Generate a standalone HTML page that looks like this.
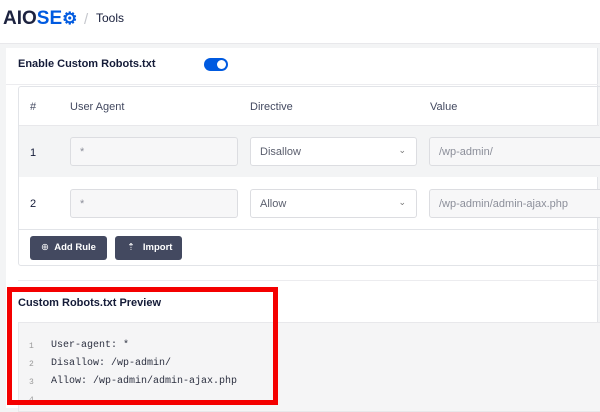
<!DOCTYPE html>
<html><head><style>
*{margin:0;padding:0;box-sizing:border-box}
body{width:600px;height:408px;overflow:hidden;background:#f3f4f5;font-family:"Liberation Sans",sans-serif;color:#141b38;position:relative}
.a{position:absolute}
.hdr{left:0;top:0;width:600px;height:44px;background:#fff;border-bottom:1px solid #e8e8eb}
.logo{left:3px;top:8px;font-weight:900;font-size:19px;letter-spacing:0px}
.card{left:6px;top:48px;width:592px;height:360px;background:#fff;border-right:1px solid #e2e4e8}
.lbl{font-size:11px;font-weight:bold;color:#141b38}
.tgl{left:204px;top:58px;width:24px;height:13px;border-radius:7px;background:#005ae0}
.tgl:after{content:"";position:absolute;right:2px;top:2px;width:9px;height:9px;border-radius:50%;background:#fff}
.tbl{left:18px;top:86px;width:590px;height:180px;border:1px solid #e2e4e8;border-radius:3px}
.th{font-size:11px;color:#434960;top:101px}
.inp{height:29px;border:1px solid #dcdde1;border-radius:3px;background:#f7f7f8;font-size:11px;color:#8c8f9a;padding:8px 9px}
.sel{background:#fff;color:#5b5f6e}
.chev{position:absolute;right:10px;top:7px;font-size:9px;color:#777}
.btn{top:236px;height:24px;background:#434960;border-radius:3px;color:#fff;font-size:9.5px;font-weight:bold;padding:6px 0 0 0}
.code{left:18px;top:322px;width:590px;height:90px;background:#f5f5f6;border:1px solid #e8e8eb;font-family:"Liberation Mono",monospace;font-size:10px;color:#2c3040}
.ln{position:absolute;left:10px;color:#999;font-size:8px}
.cl{position:absolute;left:32px}
</style></head><body>
<div class="a hdr"></div>
<div class="a logo"><span style="color:#1d2340">AIO</span><span style="color:#005ae0">SE</span><span style="color:#005ae0;font-size:17px">⚙</span></div>
<div class="a" style="left:84px;top:11px;font-size:15px;color:#c5c7cd">/</div>
<div class="a" style="left:96px;top:11px;font-size:12px;color:#141b38">Tools</div>
<div class="a card"></div>
<div class="a lbl" style="left:18px;top:58px">Enable Custom Robots.txt</div>
<div class="a tgl"></div>
<div class="a" style="left:6px;top:84px;width:592px;height:1px;background:#ececef"></div>
<div class="a tbl"></div>
<div class="a th" style="left:30px">#</div>
<div class="a th" style="left:70px">User Agent</div>
<div class="a th" style="left:250px">Directive</div>
<div class="a th" style="left:430px">Value</div>
<div class="a" style="left:19px;top:125px;width:580px;height:52px;background:#f3f4f5;border-top:1px solid #e8e8eb"></div>
<div class="a" style="left:19px;top:229px;width:580px;height:1px;background:#e2e4e8"></div>
<div class="a" style="left:30px;top:147px;font-size:11px">1</div>
<div class="a" style="left:30px;top:198px;font-size:11px">2</div>
<div class="a inp" style="left:70px;top:137px;width:168px">*</div>
<div class="a inp sel" style="left:250px;top:137px;width:167px">Disallow<span class="chev">⌄</span></div>
<div class="a inp" style="left:429px;top:137px;width:175px">/wp-admin/</div>
<div class="a inp" style="left:70px;top:189px;width:168px">*</div>
<div class="a inp sel" style="left:250px;top:189px;width:167px">Allow<span class="chev">⌄</span></div>
<div class="a inp" style="left:429px;top:189px;width:175px">/wp-admin/admin-ajax.php</div>
<div class="a btn" style="left:30px;width:77px"><span style="margin-left:11px;font-weight:normal">⊕</span>&nbsp;&nbsp;Add Rule</div>
<div class="a btn" style="left:115px;width:67px"><span style="margin-left:12px;font-weight:normal">⇡</span>&nbsp;&nbsp;&nbsp;Import</div>
<div class="a" style="left:18px;top:280px;width:580px;height:1px;background:#ececef"></div>
<div class="a lbl" style="left:18px;top:297px">Custom Robots.txt Preview</div>
<div class="a code">
<span class="ln" style="top:19px">1</span><span class="cl" style="top:17px">User-agent: *</span>
<span class="ln" style="top:37px">2</span><span class="cl" style="top:35px">Disallow: /wp-admin/</span>
<span class="ln" style="top:55px">3</span><span class="cl" style="top:53px">Allow: /wp-admin/admin-ajax.php</span>
<span class="ln" style="top:73px">4</span>
</div>
<div class="a" style="left:7px;top:287px;width:271px;height:118px;border:5px solid #f40000"></div>
</body></html>
